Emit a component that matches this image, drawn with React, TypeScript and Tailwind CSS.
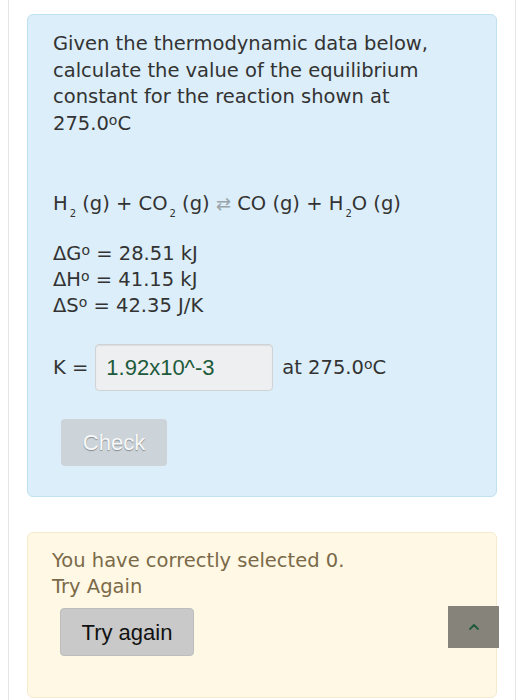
import React from 'react';

const verdana = { fontFamily: '"DejaVu Sans", Verdana, sans-serif' };
const arial = { fontFamily: '"Liberation Sans", Arial, sans-serif' };

function Sub({ children }: { children: React.ReactNode }) {
  return <sub className="text-[10px] leading-none align-[-4px] ml-[2px]">{children}</sub>;
}

function Deg() {
  return <span className="inline-block text-[14px] leading-[14px] align-[5px]">o</span>;
}

export default function App() {
  return (
    <div className="min-h-[700px] bg-white">
      <div className="mx-[8px] min-h-[700px] border-x border-[#e6e6e6] px-[18px] pt-[14px]" style={verdana}>
        {/* Question */}
        <div className="rounded-[6px] border border-[#bfe2f2] bg-[#dbeef9] pl-[25px] pr-[36px] pt-[16px] pb-[30px] text-[#333333]">
          <p className="text-[19.5px] leading-[26.5px]">
            Given the thermodynamic data below, calculate the value of the equilibrium constant for the reaction shown at{' '}
            <span className="whitespace-nowrap">275.0<Deg />C</span>
          </p>

          <p className="mt-[54px] text-[19.5px] leading-[26px]">
            H<Sub>2</Sub> (g) + CO<Sub>2</Sub> (g) <span className="text-[#9aa4aa] text-[18px]">⇄</span> CO (g) + H<Sub>2</Sub>O (g)
          </p>

          <div className="mt-[24px] text-[19.5px] leading-[26px]">
            <p>ΔG<Deg /> = 28.51 kJ</p>
            <p>ΔH<Deg /> = 41.15 kJ</p>
            <p>ΔS<Deg /> = 42.35 J/K</p>
          </div>

          <div className="mt-[25px] flex items-center text-[19.5px]">
            <span>K =</span>
            <div
              className="ml-[7px] flex h-[47px] w-[178px] items-center rounded-[4px] border border-[#cfd3d5] bg-[#eeeff0] px-[10px] text-[22px] text-[#1d5a3c] shadow-[inset_0_1px_1px_rgba(0,0,0,0.08)]"
              style={arial}
            >
              1.92x10^-3
            </div>
            <span className="ml-[9px] whitespace-nowrap">at 275.0<Deg />C</span>
          </div>

          <button
            className="mt-[28px] ml-[8px] block h-[47px] w-[106px] rounded-[4px] bg-[#cdd4d9] text-[22px] text-[#f6f8f9] [text-shadow:0_1px_1px_rgba(0,0,0,0.35)]"
            style={arial}
          >
            Check
          </button>
        </div>

        {/* Feedback */}
        <div className="relative mt-[35px] rounded-[6px] border border-[#f6ebcf] bg-[#fef8e5] pl-[24px] pt-[15px] pb-[41px] text-[#7b6a48]">
          <p className="text-[19.5px] leading-[26px]">You have correctly selected 0.</p>
          <p className="text-[19.5px] leading-[26px]">Try Again</p>
          <button
            className="mt-[8px] ml-[8px] block h-[48px] w-[134px] rounded-[4px] border border-[#bdbdbd] bg-[#c9c9c9] text-[22px] text-[#111111]"
            style={arial}
          >
            Try again
          </button>

          <div className="absolute right-[-3px] top-[73px] flex h-[42px] w-[51px] items-center justify-center bg-[#85837a]">
            <svg width="12" height="8" viewBox="0 0 12 8" fill="none">
              <path d="M2 6 L6 2 L10 6" stroke="#1f5a3e" strokeWidth="1.8" strokeLinecap="round" strokeLinejoin="round" />
            </svg>
          </div>
        </div>
      </div>
    </div>
  );
}
